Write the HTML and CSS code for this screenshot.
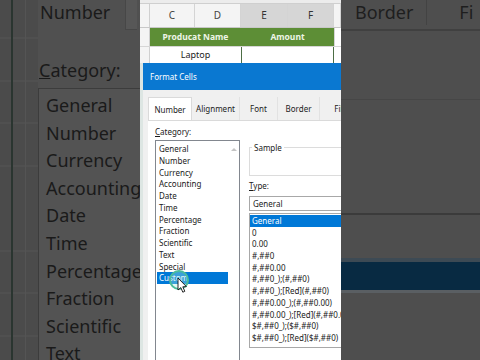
FILE: index.html
```html
<!DOCTYPE html>
<html>
<head>
<meta charset="utf-8">
<link rel="stylesheet" href="styles.css">
</head>
<body>
<div class="frame">
  <aside class="side-l">
    <div class="lgrid">
      <div class="lg-a"></div><div class="lg-line"></div><div class="lg-b"></div><div class="lg-line2"></div><div class="lg-c"></div>
    </div>
    <div class="zdlg">
      <div class="ztabs"><span class="ztab">Number</span><span class="ztab-next"></span></div>
      <div class="zlabel"><u>C</u>ategory:</div>
      <div class="zlist">
        <div>General</div><div>Number</div><div>Currency</div><div>Accounting</div><div>Date</div><div>Time</div><div>Percentage</div><div>Fraction</div><div>Scientific</div><div>Text</div>
      </div>
    </div>
  </aside>

  <main class="shot">
    <div class="xl-top"></div>
    <div class="xl-row xl-hdr">
      <div class="rh"></div>
      <div class="hc w45">C</div>
      <div class="hc w46">D</div>
      <div class="hc w47 sel">E</div>
      <div class="hc w46 sel">F</div>
      <div class="hc rest"></div>
    </div>
    <div class="xl-row xl-green">
      <div class="rh"></div>
      <div class="gc w91">Producat Name</div>
      <div class="gc w93">Amount</div>
      <div class="wc rest"></div>
    </div>
    <div class="xl-row xl-data">
      <div class="rh"></div>
      <div class="dc w91">Laptop</div>
      <div class="dc w93 boxed"></div>
      <div class="dc rest"></div>
    </div>
    <div class="dlg-wrap">
      <div class="dlg-edge"></div>
      <div class="dlg">
        <div class="dlg-title">Format Cells</div>
        <div class="dlg-body">
          <div class="tabs">
            <div class="tab t-num active">Number</div>
            <div class="tab t-ali">Alignment</div>
            <div class="tab t-font">Font</div>
            <div class="tab t-bor">Border</div>
            <div class="tab t-fill">Fill</div>
          </div>
          <div class="panel">
            <div class="cat-col">
              <div class="lbl"><u>C</u>ategory:</div>
              <div class="catlist">
                <div class="items">
                  <div class="item">General</div>
                  <div class="item">Number</div>
                  <div class="item">Currency</div>
                  <div class="item">Accounting</div>
                  <div class="item">Date</div>
                  <div class="item">Time</div>
                  <div class="item">Percentage</div>
                  <div class="item">Fraction</div>
                  <div class="item">Scientific</div>
                  <div class="item">Text</div>
                  <div class="item">Special</div>
                  <div class="item selected">Custom</div>
                </div>
                <div class="scroll"><span class="up"></span></div>
              </div>
            </div>
            <div class="type-col">
              <div class="sample"><span class="legend">Sample</span></div>
              <div class="lbl type-lbl"><u>T</u>ype:</div>
              <div class="type-input">General</div>
              <div class="type-list">
                <div class="item selected">General</div>
                <div class="item">0</div>
                <div class="item">0.00</div>
                <div class="item">#,##0</div>
                <div class="item">#,##0.00</div>
                <div class="item">#,##0_);(#,##0)</div>
                <div class="item">#,##0_);[Red](#,##0)</div>
                <div class="item">#,##0.00_);(#,##0.00)</div>
                <div class="item">#,##0.00_);[Red](#,##0.00)</div>
                <div class="item">$#,##0_);($#,##0)</div>
                <div class="item">$#,##0_);[Red]($#,##0)</div>
              </div>
            </div>
          </div>
        </div>
      </div>
    </div>
    <svg class="cursor" width="24" height="30" viewBox="0 0 24 30">
      <circle cx="11" cy="11" r="9" fill="rgba(170,235,220,0.35)" stroke="#4cbc9a" stroke-width="2"/>
      <path d="M10 9 L10 21 L12.8 18.6 L14.8 23.2 L16.8 22.3 L14.8 17.8 L18.4 17.6 Z" fill="#fff" stroke="#111" stroke-width="0.9" stroke-linejoin="round"/>
    </svg>
  </main>

  <aside class="side-r">
    <div class="rtabs"><span class="rtab r-bor">Border</span><span class="rsep"></span><span class="rtab r-fi">Fi</span></div>
    <div class="r1"></div>
    <div class="r2"></div>
    <div class="r3"></div>
    <div class="rsel"></div>
    <div class="r4"></div>
  </aside>
</div>
</body>
</html>
```

FILE: styles.css
```css
* { box-sizing: border-box; }
html, body { margin: 0; padding: 0; }
body {
  width: 480px; height: 360px; overflow: hidden; background: #000;
  font-family: "Noto Sans", "Open Sans", sans-serif;
}
.frame { display: flex; width: 480px; height: 360px; }

/* ---------- left blurred side ---------- */
.side-l { width: 140px; flex: none; display: flex; background: #4b4b4b; overflow: hidden; }
.lgrid {
  width: 38px; flex: none; display: flex;
  background: repeating-linear-gradient(to bottom, transparent 0 41.5px, #555 41.5px 42.5px);
  background-position: 0 -3.5px;
}
.lg-a { width: 11px; }
.lg-line { width: 2px; background: #2a3530; }
.lg-b { width: 12px; }
.lg-line2 { width: 1px; background: #545454; }
.lg-c { width: 12px; }
.zdlg { flex: 1; background: #505050; color: #1a1a1a; font-size: 18px; border-right: 3px solid #585858; }
.ztabs { height: 30px; display: flex; }
.ztab { width: 87px; padding-left: 2px; line-height: 24px; }
.ztab-next { width: 12px; background: #575757; border-left: 1px solid #474747; border-bottom: 1px solid #474747; }
.zlabel { margin-top: 28px; padding-left: 1px; line-height: 24.5px; }
.zlist {
  margin-top: 5.5px; border-top: 1px solid #3c3c3c; border-left: 1px solid #3c3c3c;
  padding: 3px 0 0 7px; line-height: 27.6px; background: #535353; height: 300px;
}

/* ---------- middle screenshot ---------- */
.shot { width: 201px; flex: none; position: relative; overflow: hidden; background: #fff;
  display: flex; flex-direction: column; font-size: 8px; color: #1a1a1a; }
.xl-top { height: 4px; flex: none; background: #ececec; border-bottom: 1px solid #cfcfcf; }
.xl-row { display: flex; flex: none; }
.rh { width: 10px; flex: none; background: #f4f4f4; border-right: 1px solid #d0d0d0; }
.w45 { width: 45px; } .w46 { width: 46px; } .w47 { width: 47px; }
.w91 { width: 91px; } .w93 { width: 93px; }
.rest { flex: 1; }
.xl-hdr { height: 24px; border-bottom: 1px solid #c8c8c8; }
.hc { flex: none; background: #f4f4f4; border-right: 1px solid #d4d4d4; text-align: center;
  line-height: 23px; font-size: 10px; color: #444; }
.hc.rest { flex: 1; }
.hc.sel { background: #d6d6d6; color: #333; }
.xl-green { height: 19px; border-bottom: 1px solid #d6d6d6; }
.gc { flex: none; background: #5d8e36; color: #eef5e6; font-weight: 700; text-align: center;
  line-height: 18px; font-size: 8.5px; }
.wc { background: #fff; border-left: 1px solid #d6d6d6; }
.xl-data { height: 16px; }
.dc { flex: none; background: #fff; text-align: center; line-height: 16px; font-size: 9px; color: #222; }
.dc.rest { flex: 1; }
.dc.boxed { border-left: 1px solid #4d6e45; border-right: 1px solid #4d6e45; }

.dlg-wrap { flex: 1; display: flex; min-height: 0; }
.dlg-edge { width: 3px; flex: none; background: #dde6e3; }
.dlg { width: 260px; flex: none; display: flex; flex-direction: column; }
.dlg-title { height: 27px; flex: none; background: #0a78d1; color: #fff; font-size: 8px;
  line-height: 27px; padding-left: 7px; }
.dlg-body { flex: 1; background: #f0f0f0; padding: 7px 0 0 5px; display: flex; flex-direction: column; }
.tabs { display: flex; height: 23px; flex: none; }
.tab { line-height: 23px; text-align: center; color: #222; border-right: 1px solid #e2e2e2; }
.t-num { width: 44px; }
.t-ali { width: 48px; }
.t-font { width: 38px; }
.t-bor { width: 42px; }
.t-fill { width: 40px; }
.tab.active { background: #fff; border: 1px solid #dadada; border-bottom: none; }
.panel { flex: 1; background: #fff; border-top: 1px solid #dadada; display: flex; gap: 9px;
  padding: 5px 0 0 7px; }
.lbl { line-height: 11px; height: 11px; }
.cat-col { width: 85px; flex: none; display: flex; flex-direction: column; }
.catlist { margin-top: 3px; flex: 1; display: flex; border: 1px solid #82878f; border-bottom: none; }
.items { flex: 1; padding: 2px 0 0 1px; }
.item { line-height: 11.75px; height: 11.75px; padding-left: 2px; white-space: nowrap; }
.item.selected { background: #0078d7; color: #fff; }
.scroll { width: 11px; flex: none; position: relative; }
.up { display: block; margin: 7px auto 0; width: 0; height: 0;
  border-left: 3px solid transparent; border-right: 3px solid transparent; border-bottom: 3px solid #c4c4c4; }

.type-col { width: 150px; flex: none; }
.sample { margin-top: 21px; height: 29px; border: 1px solid #dcdcdc; border-right: none; }
.legend { display: block; width: fit-content; margin: -6px 0 0 2px; padding: 0 2px;
  background: #fff; line-height: 11px; }
.type-lbl { margin-top: 4px; }
.type-input { margin-top: 5px; height: 15px; border: 1px solid #a8a8a8; border-right: none;
  line-height: 13px; padding-left: 3px; }
.type-list { margin-top: 2px; height: 135px; border: 1px solid #a8a8a8; border-right: none; padding-top: 1px; }
.type-list .item { padding-left: 2px; line-height: 11.7px; height: 11.7px; }

.cursor { position: absolute; left: 28px; top: 269px; }

/* ---------- right blurred side ---------- */
.side-r { width: 139px; flex: none; background: #4e4e4e; overflow: hidden; display: flex; flex-direction: column; }
.rtabs { height: 31px; flex: none; display: flex; border-bottom: 2px solid #404040; color: #1e1e1e; font-size: 18px; }
.rtab { line-height: 24px; }
.r-bor { padding-left: 14px; }
.rsep { width: 1px; height: 25px; background: #434343; margin-left: 13px; }
.r-fi { margin-left: 32px; }
.r1 { height: 69px; flex: none; border-bottom: 1px solid #464646; }
.r2 { height: 115px; flex: none; border-bottom: 2px solid #3b3b3b; }
.r3 { height: 47px; flex: none; border-bottom: 4px solid #3d4a54; }
.rsel { height: 31px; flex: none; background: #082a42; border-bottom: 3px solid #5a5f63; }
.r4 { flex: 1; }
```
